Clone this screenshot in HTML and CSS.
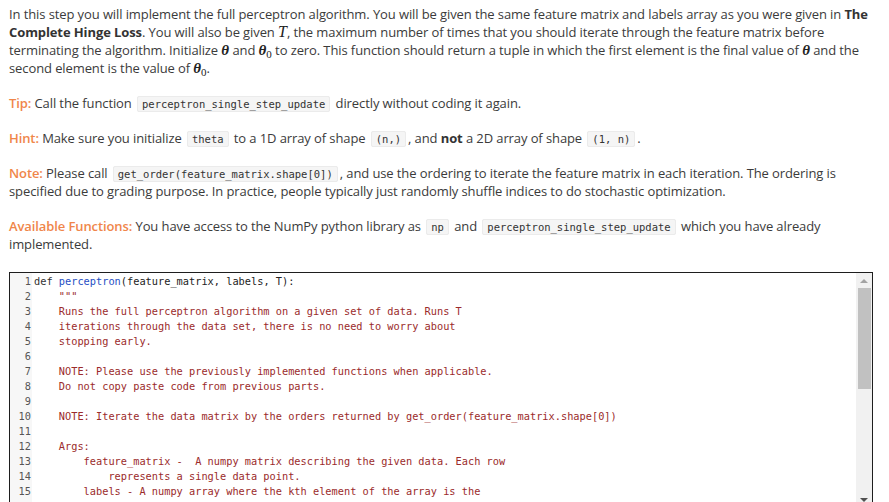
FILE: index.html
```html
<!DOCTYPE html>
<html>
<head>
<meta charset="utf-8">
<link rel="stylesheet" href="styles.css">
</head>
<body>
<div class="page">
  <p class="para">In this step you will implement the full perceptron algorithm. You will be given the same feature matrix and labels array as you were given in <b>The Complete Hinge Loss</b>. You will also be given <span class="m big">T</span>, the maximum number of times that you should iterate through the feature matrix before terminating the algorithm. Initialize <span class="m">θ</span> and <span class="m">θ<sub>0</sub></span> to zero. This function should return a tuple in which the first element is the final value of <span class="m">θ</span> and the second element is the value of <span class="m">θ<sub>0</sub></span>.</p>

  <p class="para"><span class="lbl">Tip:</span> Call the function <code class="ic">perceptron_single_step_update</code> directly without coding it again.</p>

  <p class="para"><span class="lbl">Hint:</span> Make sure you initialize <code class="ic">theta</code> to a 1D array of shape <code class="ic">(n,)</code>, and <b>not</b> a 2D array of shape <code class="ic">(1, n)</code>.</p>

  <p class="para"><span class="lbl">Note:</span> Please call <code class="ic">get_order(feature_matrix.shape[0])</code>, and use the ordering to iterate the feature matrix in each iteration. The ordering is specified due to grading purpose. In practice, people typically just randomly shuffle indices to do stochastic optimization.</p>

  <p class="para"><span class="lbl">Available Functions:</span> You have access to the NumPy python library as <code class="ic">np</code> and <code class="ic">perceptron_single_step_update</code> which you have already implemented.</p>

  <div class="editor">
    <div class="gutter">
      <div>1</div><div>2</div><div>3</div><div>4</div><div>5</div><div>6</div><div>7</div><div>8</div><div>9</div><div>10</div><div>11</div><div>12</div><div>13</div><div>14</div><div>15</div><div>16</div><div>17</div>
    </div>
    <pre class="code"><span class="kw">def</span> <span class="fn">perceptron</span>(feature_matrix, labels, T):
<span class="s">    """</span>
<span class="s">    Runs the full perceptron algorithm on a given set of data. Runs T</span>
<span class="s">    iterations through the data set, there is no need to worry about</span>
<span class="s">    stopping early.</span>

<span class="s">    NOTE: Please use the previously implemented functions when applicable.</span>
<span class="s">    Do not copy paste code from previous parts.</span>

<span class="s">    NOTE: Iterate the data matrix by the orders returned by get_order(feature_matrix.shape[0])</span>

<span class="s">    Args:</span>
<span class="s">        feature_matrix -  A numpy matrix describing the given data. Each row</span>
<span class="s">            represents a single data point.</span>
<span class="s">        labels - A numpy array where the kth element of the array is the</span>
<span class="s">            correct classification of the kth row of the feature matrix.</span>
<span class="s">        T - An integer indicating how many times the perceptron algorithm</span></pre>
    <div class="sbar">
      <div class="arrow up"></div>
      <div class="thumb"></div>
      <div class="fill"></div>
      <div class="arrow down"></div>
    </div>
  </div>
</div>
</body>
</html>
```
FILE: styles.css
```css
html, body {
  margin: 0;
  padding: 0;
  background: #ffffff;
  overflow: hidden;
}
.page {
  width: 864px;
  padding: 5px 0 0 9px;
  font-family: "Open Sans", "Liberation Sans", sans-serif;
  font-size: 13px;
  line-height: 18px;
  letter-spacing: -0.1px;
  color: #3b3b3b;
}
.para {
  margin: 0 0 17px 0;
}
.para b {
  font-weight: 700;
  color: #333;
}
.m {
  font-family: "Liberation Serif", serif;
  font-style: italic;
  font-size: 15px;
  line-height: 1;
  font-weight: 700;
  color: #222;
  letter-spacing: 0;
}
.m.big {
  font-size: 16px;
  font-weight: 400;
}
.m sub {
  font-size: 11px;
  font-style: normal;
  font-weight: 400;
  vertical-align: -3px;
  line-height: 0;
}
.lbl {
  color: #f0864a;
  font-weight: 600;
}
.ic {
  font-family: "DejaVu Sans Mono", monospace;
  font-size: 10.5px;
  line-height: 12px;
  letter-spacing: 0;
  color: #333;
  background: #f5f5f5;
  border: 1px solid #ebebeb;
  border-radius: 2px;
  padding: 1px 4px;
  margin: 0 2px;
}
.editor {
  display: flex;
  margin-top: 19px;
  width: 862px;
  height: 232px;
  border: 1px solid #1e1e1e;
  border-bottom: none;
  overflow: hidden;
  letter-spacing: 0;
}
.gutter {
  width: 21px;
  flex: none;
  background: #f7f7f7;
  padding-top: 1px;
  font-family: "DejaVu Sans Mono", monospace;
  font-size: 10.3px;
  line-height: 15px;
  color: #555;
  text-align: right;
  padding-right: 1px;
}
.code {
  flex: 1;
  margin: 0;
  padding: 1px 0 0 2px;
  font-family: "DejaVu Sans Mono", monospace;
  font-size: 10.3px;
  line-height: 15px;
  color: #222;
  overflow: hidden;
  white-space: pre;
}
.kw { color: #333; }
.fn { color: #1f4fc4; }
.s { color: #9b2b2b; }
.sbar {
  flex: none;
  width: 16px;
  background: #f1f1f1;
  display: flex;
  flex-direction: column;
  align-items: center;
}
.arrow {
  width: 0;
  height: 0;
  border-left: 4px solid transparent;
  border-right: 4px solid transparent;
  flex: none;
}
.arrow.up {
  border-bottom: 4px solid #a3a3a3;
  margin: 6px 0 5px;
}
.arrow.down {
  border-top: 4px solid #505050;
  margin: 5px 0 3px;
}
.thumb {
  width: 13px;
  height: 101px;
  background: #c1c1c1;
  flex: none;
}
.fill {
  flex: 1;
}
```
